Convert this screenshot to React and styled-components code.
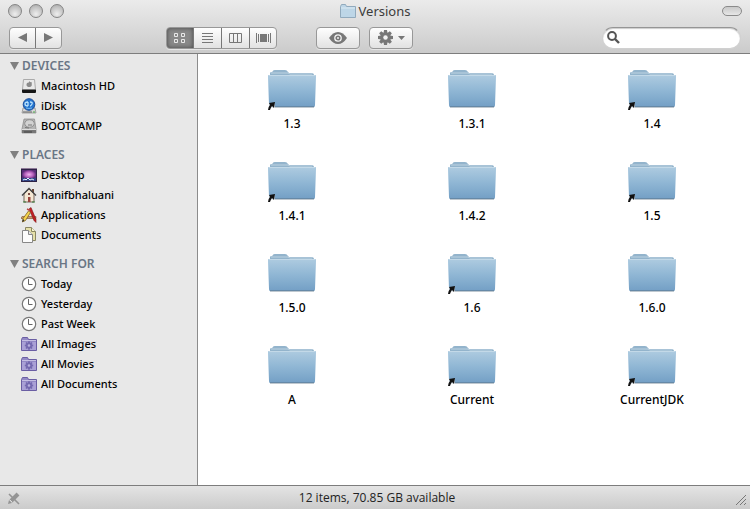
import React, { useState } from 'react';
import styled, { createGlobalStyle, css } from 'styled-components';

const GlobalStyle = createGlobalStyle`
  * {
    box-sizing: border-box;
  }
  body {
    margin: 0;
    background: #fff;
    color: #000;
    font-family: 'Lucida Grande', 'Noto Sans', 'Open Sans', sans-serif;
    font-size: 12px;
  }
  button {
    padding: 0;
    border: 0;
    background: none;
    color: inherit;
    font: inherit;
  }
  svg {
    display: block;
    flex: none;
  }
`;

const WindowBlock = styled.div`
  display: flex;
  flex-direction: column;
  min-height: 100vh;
`;

const Header = styled.header`
  background: linear-gradient(#ebebeb, #cbcbcb);
  border-bottom: 1px solid #7d7d7d;
`;

const TitleBar = styled.div`
  display: grid;
  grid-template-columns: 1fr auto 1fr;
  align-items: center;
  height: 22px;
  padding: 0 8px;
`;

const Lights = styled.div`
  display: flex;
  gap: 7px;
`;

const Light = styled.button`
  width: 14px;
  height: 14px;
  border: 1px solid #858585;
  border-radius: 50%;
  background: radial-gradient(circle at 50% 75%, #eeeeee, #c4c4c4 60%, #a5a5a5);
`;

const Title = styled.h1`
  display: flex;
  align-items: center;
  gap: 3px;
  margin: 0;
  color: #3c3c3c;
  font-size: 13px;
  font-weight: 400;
  line-height: 20px;
`;

const Pill = styled.button`
  justify-self: end;
  width: 20px;
  height: 10px;
  border: 1px solid #8a8a8a;
  border-radius: 5px;
  background: linear-gradient(#c9c9c9, #e6e6e6);
`;

const Toolbar = styled.div`
  display: flex;
  align-items: center;
  height: 31px;
  padding: 0 9px;
`;

const Group = styled.div`
  display: flex;
  height: 22px;
  margin-right: ${(props) => props.$after || 0}px;
  border: 1px solid #989898;
  border-radius: 4px;
  background: linear-gradient(#fefefe, #e2e2e2);
  box-shadow: 0 1px 0 #e6e6e6;
  overflow: hidden;
`;

const ToolButton = styled.button`
  display: flex;
  align-items: center;
  justify-content: center;
  gap: 5px;
  width: ${(props) => props.$width}px;
  color: #777;
  & + & {
    border-left: 1px solid #777;
  }
  ${(props) =>
    props.$active &&
    css`
      color: #e8e8e8;
      background: #888;
      box-shadow: inset 0 0 4px #444;
    `}
`;

const SearchField = styled.label`
  display: flex;
  align-items: center;
  gap: 4px;
  width: 139px;
  height: 22px;
  margin-left: auto;
  padding: 0 8px 0 4px;
  border: 1px solid #d0d0d0;
  border-top-color: #959595;
  border-radius: 11px;
  background: #fff;
  box-shadow: inset 0 1px 1px #ccc;
  input {
    flex: 1;
    min-width: 0;
    border: 0;
    outline: 0;
    background: transparent;
    font: inherit;
  }
`;

const Body = styled.div`
  display: flex;
  flex: 1;
`;

const Sidebar = styled.nav`
  flex: 0 0 198px;
  padding-top: 2px;
  border-right: 1px solid #8c8c8c;
  background: #e8e8e8;
`;

const Section = styled.section`
  margin-bottom: 9px;
`;

const SectionTitle = styled.h2`
  display: flex;
  align-items: center;
  gap: 3px;
  height: 20px;
  margin: 0;
  padding-left: 10px;
  color: #6a7685;
  font-size: 12px;
  font-weight: 600;
  line-height: 20px;
`;

const List = styled.ul`
  margin: 0;
  padding: 0;
  list-style: none;
`;

const SideLink = styled.a`
  display: flex;
  align-items: center;
  gap: 4px;
  height: 20px;
  padding-left: 21px;
  color: #000;
  font-size: 11px;
  font-weight: 500;
  line-height: 20px;
  text-decoration: none;
`;

const FolderGrid = styled.main`
  display: grid;
  flex: 1;
  grid-template-columns: repeat(auto-fill, 180px);
  grid-auto-rows: 92px;
  align-content: start;
  padding: 14px 4px;
  background: #fff;
`;

const FolderItem = styled.button`
  display: flex;
  flex-direction: column;
  align-items: center;
  gap: 4px;
  font-weight: 500;
  line-height: 20px;
`;

const StatusBar = styled.footer`
  display: grid;
  grid-template-columns: 1fr auto 1fr;
  align-items: center;
  height: 24px;
  padding: 0 3px 0 7px;
  border-top: 1px solid #7d7d7d;
  background: linear-gradient(#e4e4e4, #cbcbcb);
  color: #222;
  font-family: 'Lucida Grande', 'Open Sans', sans-serif;
`;

const Grip = styled.svg`
  justify-self: end;
  align-self: end;
  margin-bottom: 3px;
`;

const teeth = [0, 45, 90, 135, 180, 225, 270, 315];

const Gear = ({ cx, cy, r, color, hole }) => (
  <g transform={`translate(${cx} ${cy}) scale(${r / 8})`} fill={color}>
    {teeth.map((angle) => (
      <path key={angle} d="M-1.6-8h3.2l.6 4h-4.4z" transform={`rotate(${angle})`} />
    ))}
    <circle r="5.6" />
    <circle r="2.4" fill={hole} />
  </g>
);

const FolderIcon = ({ alias }) => (
  <svg width="48" height="42" viewBox="0 0 48 42">
    <defs>
      <linearGradient id="folderFront" x1="0" y1="0" x2="0" y2="1">
        <stop offset="0" stopColor="#aecbe0" />
        <stop offset="0.5" stopColor="#8fb6d4" />
        <stop offset="1" stopColor="#739fc5" />
      </linearGradient>
    </defs>
    <path d="M2 10V5q0-1 2-1l1-1q0-1 2-1h10q2 0 3 2l1 1h22q3 0 3 2v4z" fill="#93b4cc" />
    <path d="M3 5h17l2 1h22" fill="none" stroke="#bdd3e2" />
    <path d="M0 9q-1-2 1-2h46q2 0 1 2l-1 28q0 2-1 2H2q-1 0-1-2z" fill="url(#folderFront)" />
    <path d="M1 7.500h46" stroke="#c3d9e8" />
    <path d="M2 38.500h44" stroke="#6689a7" />
    <path d="M2 39.500h44" stroke="#bfc8cf" />
    {alias && (
      <g>
        <path d="M0 35h7v6H0z" fill="#fff" opacity="0.6" />
        <path d="M1 35l6-1-1 6-2-2q-1 1-2 4H0q0-3 2-5z" fill="#111" />
      </g>
    )}
  </svg>
);

const DriveIcon = () => (
  <svg width="16" height="16" viewBox="0 0 16 16">
    <path d="M2.500 1.500h11l1 10h-13z" fill="#e9e9e9" stroke="#aaa" />
    <path d="M8 4q1-1 1-1v1q2 0 2 1-1 1 0 2-1 2-2 2H7Q5 8 5.500 6 6 4 8 4.500z" fill="#8b8b8b" />
    <path d="M1 11h14v3q0 1-1 1H2q-1 0-1-1z" fill="#161616" />
    <path d="M1 11.500h14" stroke="#777" />
  </svg>
);

const IDiskIcon = () => (
  <svg width="16" height="16" viewBox="0 0 16 16">
    <path d="M2 10h12l1 5H1z" fill="#d6d6d6" stroke="#888" strokeWidth="0.7" />
    <circle cx="8" cy="6.500" r="5.800" fill="#2474ce" stroke="#174a99" />
    <path d="M7 4q-3 0-3 2t3 2M9 4q3 0 2 2t-2 2M7 4v4" fill="none" stroke="#b9e0fc" strokeWidth="1.300" />
    <path d="M5 10q3 1 6 0" fill="none" stroke="#75baf1" />
    <path d="M2 14h9" stroke="#666" />
    <path d="M12 14h2" stroke="#4aac49" />
  </svg>
);

const BootcampIcon = () => (
  <svg width="16" height="16" viewBox="0 0 16 16">
    <path d="M3 1h10.500l1.500 10v4H1v-4z" fill="#b5b5b5" stroke="#888" strokeWidth="0.7" />
    <ellipse cx="8.500" cy="5.500" rx="4.800" ry="3.800" fill="#d2d2d2" stroke="#909090" />
    <path d="M7 7h4M4 9.500l4 .5" stroke="#777" />
    <path d="M1 12h14v3H1z" fill="#777" />
    <path d="M1 11.500h14" stroke="#ddd" />
    <path d="M3 14h8" stroke="#444" />
  </svg>
);

const DesktopIcon = () => (
  <svg width="16" height="16" viewBox="0 0 16 16">
    <defs>
      <radialGradient id="aurora">
        <stop offset="0" stopColor="#f1b4f0" />
        <stop offset="0.6" stopColor="#b45fbb" />
        <stop offset="1" stopColor="#5a2c78" />
      </radialGradient>
    </defs>
    <path d="M0 1h16v14H0z" fill="#2d2145" />
    <path d="M1 3h14v9H1z" fill="url(#aurora)" />
    <path d="M0 1.500h16" stroke="#8e7b98" />
    <path d="M1 11h14v3H1z" fill="#304587" />
    <path d="M2 13l2-1 1 1 2-2 2 2 2-1 2 1" fill="none" stroke="#e7edff" />
  </svg>
);

const HomeIcon = () => (
  <svg width="16" height="16" viewBox="0 0 16 16">
    <path d="M11 2h2v5h-2z" fill="#694736" />
    <path d="M3 7l5-5 5 5v8H3z" fill="#f4e7d3" stroke="#58483c" strokeWidth="0.8" />
    <path d="M1 8.500l7-7 7 7" fill="none" stroke="#444" strokeWidth="1.400" />
    <path d="M7 10h2.500v5H7z" fill="#98423c" />
    <path d="M7 6h2v2H7z" fill="#7a4b43" />
    <path d="M2 15h3M11 15h3" stroke="#3d803e" />
  </svg>
);

const AppsIcon = () => (
  <svg width="16" height="16" viewBox="0 0 16 16">
    <path d="M1 9.500h14v2H0z" fill="#c89a6a" stroke="#7b5030" strokeWidth="0.6" />
    <path d="M8 2l2-1.500 5 12v3l-2-2z" fill="#c52025" stroke="#7b1313" strokeWidth="0.6" />
    <path d="M7.500 4l2 1.500-5 8-3 1.500.500-3.500z" fill="#f5d44d" stroke="#806020" strokeWidth="0.8" />
    <path d="M1 15l1-3 1.500 1.500z" fill="#333" />
    <path d="M6 2l3 1.500" stroke="#b44" strokeWidth="1.500" />
  </svg>
);

const DocsIcon = () => (
  <svg width="16" height="16" viewBox="0 0 16 16">
    <path d="M4.500.5h6l4 4v9h-10z" fill="#e5e0a9" stroke="#8a8763" />
    <path d="M10.500.5v4h4" fill="#faf7cf" stroke="#8a8763" />
    <path d="M1.500 3.500h6l4 4v8h-10z" fill="#fcfcfc" stroke="#888" />
    <path d="M7.500 3.500v4h4" fill="#e7e7e7" stroke="#888" />
  </svg>
);

const ClockIcon = () => (
  <svg width="16" height="16" viewBox="0 0 16 16">
    <circle cx="8" cy="8" r="6.700" fill="#fff" stroke="#777" strokeWidth="1.200" />
    <path d="M7.500 3v5.500h4" fill="none" stroke="#666" />
  </svg>
);

const SmartIcon = () => (
  <svg width="16" height="16" viewBox="0 0 16 16">
    <path d="M.5 14.500V3.500l1-2h5l1 2h8v11z" fill="#9389c5" stroke="#6a5ea3" />
    <path d="M1 4.500h14" stroke="#c5bfe4" />
    <path d="M1 6h14v8H1z" fill="#aaa1d6" />
    <Gear cx={8} cy={9.5} r={4.2} color="#7469b0" hole="#b9b1df" />
  </svg>
);

const sections = [
  {
    title: 'DEVICES',
    items: [
      { name: 'Macintosh HD', Icon: DriveIcon },
      { name: 'iDisk', Icon: IDiskIcon },
      { name: 'BOOTCAMP', Icon: BootcampIcon },
    ],
  },
  {
    title: 'PLACES',
    items: [
      { name: 'Desktop', Icon: DesktopIcon },
      { name: 'hanifbhaluani', Icon: HomeIcon },
      { name: 'Applications', Icon: AppsIcon },
      { name: 'Documents', Icon: DocsIcon },
    ],
  },
  {
    title: 'SEARCH FOR',
    items: [
      { name: 'Today', Icon: ClockIcon },
      { name: 'Yesterday', Icon: ClockIcon },
      { name: 'Past Week', Icon: ClockIcon },
      { name: 'All Images', Icon: SmartIcon },
      { name: 'All Movies', Icon: SmartIcon },
      { name: 'All Documents', Icon: SmartIcon },
    ],
  },
];

const folders = [
  { name: '1.3', alias: true },
  { name: '1.3.1' },
  { name: '1.4', alias: true },
  { name: '1.4.1', alias: true },
  { name: '1.4.2' },
  { name: '1.5', alias: true },
  { name: '1.5.0' },
  { name: '1.6', alias: true },
  { name: '1.6.0' },
  { name: 'A' },
  { name: 'Current', alias: true },
  { name: 'CurrentJDK', alias: true },
];

const views = [
  {
    name: 'Icons',
    width: 26,
    icon: (
      <svg width="12" height="12" viewBox="0 0 12 12" fill="none" stroke="currentColor">
        <path d="M.5 1.500h3v3h-3zM7.500 1.500h3v3h-3zM.5 7.500h3v3h-3zM7.500 7.500h3v3h-3z" />
      </svg>
    ),
  },
  {
    name: 'List',
    width: 28,
    icon: (
      <svg width="11" height="12" viewBox="0 0 11 12" stroke="currentColor">
        <path d="M0 1.500h11M0 4.500h11M0 7.500h11M0 10.500h11" />
      </svg>
    ),
  },
  {
    name: 'Columns',
    width: 28,
    icon: (
      <svg width="13" height="10" viewBox="0 0 13 10" fill="none" stroke="currentColor">
        <path d="M.5.5h12v9H.5zM4.500 1v9M8.500 1v9" />
      </svg>
    ),
  },
  {
    name: 'Cover Flow',
    width: 27,
    icon: (
      <svg width="15" height="10" viewBox="0 0 15 10" stroke="currentColor">
        <path d="M.5 0v10M2.500 1v8M12.500 1v8M14.500 0v10" />
        <path d="M4 1h7v8H4z" fill="currentColor" stroke="none" />
      </svg>
    ),
  },
];

const App = () => {
  const [view, setView] = useState('Icons');
  const [query, setQuery] = useState('');

  return (
    <WindowBlock>
      <GlobalStyle />
      <Header>
        <TitleBar>
          <Lights>
            <Light aria-label="Close" />
            <Light aria-label="Minimize" />
            <Light aria-label="Zoom" />
          </Lights>
          <Title>
            <svg width="16" height="14" viewBox="0 0 16 14">
              <path d="M.5 13.500v-11l1-2h4l1 2h9v11z" fill="#bdd6e7" stroke="#91aabd" />
              <path d="M1 4h14" stroke="#dcebf4" />
            </svg>
            Versions
          </Title>
          <Pill aria-label="Toggle toolbar" />
        </TitleBar>
        <Toolbar>
          <Group $after={104}>
            <ToolButton $width={25} aria-label="Back">
              <svg width="9" height="9" viewBox="0 0 9 9" fill="currentColor">
                <path d="M0 4.500L9 0v9z" />
              </svg>
            </ToolButton>
            <ToolButton $width={26} aria-label="Forward">
              <svg width="9" height="9" viewBox="0 0 9 9" fill="currentColor">
                <path d="M9 4.500L0 0v9z" />
              </svg>
            </ToolButton>
          </Group>
          <Group $after={39}>
            {views.map((item) => (
              <ToolButton
                key={item.name}
                $width={item.width}
                $active={view === item.name}
                aria-label={item.name}
                onClick={() => setView(item.name)}
              >
                {item.icon}
              </ToolButton>
            ))}
          </Group>
          <Group $after={9}>
            <ToolButton $width={42} aria-label="Quick Look">
              <svg width="18" height="12" viewBox="0 0 18 12">
                <path d="M0 6q4-6 9-6t9 6q-4 6-9 6T0 6z" fill="currentColor" />
                <circle cx="9" cy="6" r="3.200" fill="currentColor" stroke="#f2f2f2" strokeWidth="1.300" />
                <circle cx="9" cy="6" r="1" fill="#f2f2f2" />
              </svg>
            </ToolButton>
          </Group>
          <Group>
            <ToolButton $width={42} aria-label="Action">
              <svg width="15" height="15" viewBox="0 0 16 16">
                <Gear cx={8} cy={8} r={8} color="currentColor" hole="#f2f2f2" />
              </svg>
              <svg width="7" height="4" viewBox="0 0 7 4" fill="currentColor">
                <path d="M0 0h7L3.500 4z" />
              </svg>
            </ToolButton>
          </Group>
          <SearchField>
            <svg width="13" height="13" viewBox="0 0 13 13" fill="none" stroke="#555">
              <circle cx="5" cy="5" r="3.900" strokeWidth="2" />
              <path d="M8 8l4 4" strokeWidth="2.400" />
            </svg>
            <input
              type="text"
              aria-label="Search"
              value={query}
              onChange={(e) => setQuery(e.target.value)}
            />
          </SearchField>
        </Toolbar>
      </Header>

      <Body>
        <Sidebar>
          {sections.map((section) => (
            <Section key={section.title}>
              <SectionTitle>
                <svg width="9" height="8" viewBox="0 0 9 8" fill="#808080">
                  <path d="M0 0h9L4.500 8z" />
                </svg>
                {section.title}
              </SectionTitle>
              <List>
                {section.items.map(({ name, Icon }) => (
                  <li key={name}>
                    <SideLink href="#">
                      <Icon />
                      {name}
                    </SideLink>
                  </li>
                ))}
              </List>
            </Section>
          ))}
        </Sidebar>
        <FolderGrid>
          {folders.map((folder) => (
            <FolderItem key={folder.name}>
              <FolderIcon alias={folder.alias} />
              {folder.name}
            </FolderItem>
          ))}
        </FolderGrid>
      </Body>

      <StatusBar>
        <svg width="14" height="14" viewBox="0 0 14 14" fill="none" stroke="#949494">
          <path d="M2 3l10 10" strokeWidth="1.600" />
          <path d="M4 10l7-7" strokeWidth="4" />
          <path d="M1 13l1-4 3 3z" fill="#949494" stroke="none" />
          <path d="M3 9l2 2" stroke="#ddd" />
        </svg>
        <span>12 items, 70.85 GB available</span>
        <Grip width="12" height="12" viewBox="0 0 12 12" stroke="#777">
          <path d="M1 11L11 1M5 11l6-6M9 11l2-2" />
        </Grip>
      </StatusBar>
    </WindowBlock>
  );
};

export default App;
